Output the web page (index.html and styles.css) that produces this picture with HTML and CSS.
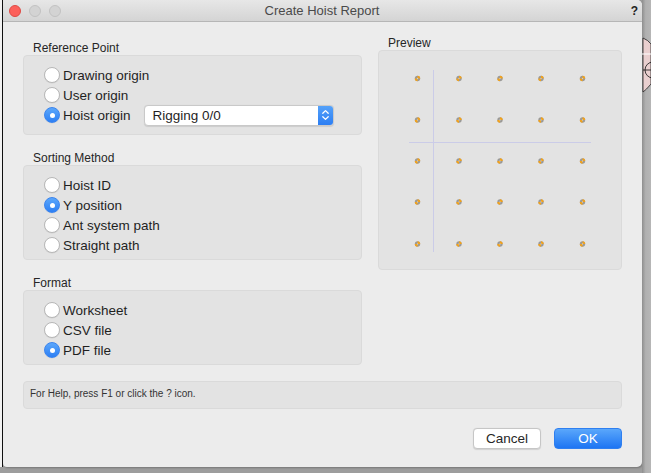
FILE: index.html
```html
<!DOCTYPE html>
<html>
<head>
<meta charset="utf-8">
<title>Create Hoist Report</title>
<link rel="stylesheet" href="styles.css">
</head>
<body>
<div class="screen">
  <div class="left-strip"></div>
  <div class="window">
    <div class="titlebar">
      <div class="lights">
        <span class="light red"></span>
        <span class="light gray"></span>
        <span class="light gray"></span>
      </div>
      <div class="title">Create Hoist Report</div>
      <div class="help-q">?</div>
    </div>
    <div class="content">
      <div class="columns">
        <div class="col-left">
          <div class="group-label">Reference Point</div>
          <div class="group group-ref">
            <div class="row"><span class="radio"></span><span class="rlabel">Drawing origin</span></div>
            <div class="row"><span class="radio"></span><span class="rlabel">User origin</span></div>
            <div class="row"><span class="radio on"></span><span class="rlabel">Hoist origin</span>
              <div class="popup">
                <span class="popup-text">Rigging 0/0</span>
                <span class="stepper">
                  <svg width="15" height="20" viewBox="0 0 15 20"><path d="M4.8 8.2 L7.5 5.6 L10.2 8.2" fill="none" stroke="#fff" stroke-width="1.3" stroke-linecap="round" stroke-linejoin="round"/><path d="M4.8 11.8 L7.5 14.4 L10.2 11.8" fill="none" stroke="#fff" stroke-width="1.3" stroke-linecap="round" stroke-linejoin="round"/></svg>
                </span>
              </div>
            </div>
          </div>

          <div class="group-label gap">Sorting Method</div>
          <div class="group group-sort">
            <div class="row"><span class="radio"></span><span class="rlabel">Hoist ID</span></div>
            <div class="row"><span class="radio on"></span><span class="rlabel">Y position</span></div>
            <div class="row"><span class="radio"></span><span class="rlabel">Ant system path</span></div>
            <div class="row"><span class="radio"></span><span class="rlabel">Straight path</span></div>
          </div>

          <div class="group-label gap">Format</div>
          <div class="group group-format">
            <div class="row"><span class="radio"></span><span class="rlabel">Worksheet</span></div>
            <div class="row"><span class="radio"></span><span class="rlabel">CSV file</span></div>
            <div class="row"><span class="radio on"></span><span class="rlabel">PDF file</span></div>
          </div>
        </div>

        <div class="col-right">
          <div class="group-label preview-label">Preview</div>
          <div class="preview">
            <svg width="244" height="219" viewBox="0 0 244 219">
              <defs>
                <g id="hoist">
                  <circle r="2.7" fill="#9c9a96"/>
                  <path d="M0 0 L0 -2.7 A2.7 2.7 0 0 1 2.7 0 Z" fill="#f2a21c"/>
                  <path d="M0 0 L0 2.7 A2.7 2.7 0 0 1 -2.7 0 Z" fill="#f2a21c"/>
                  <circle r="0.7" fill="#d8d0c0"/>
                </g>
              </defs>
              <line x1="55.5" y1="20" x2="55.5" y2="202" stroke="#cbcce8" stroke-width="1"/>
              <line x1="31" y1="92.5" x2="213" y2="92.5" stroke="#cbcce8" stroke-width="1"/>
              <g>
                <use href="#hoist" x="39.5" y="28.5"/><use href="#hoist" x="81" y="28.5"/><use href="#hoist" x="122" y="28.5"/><use href="#hoist" x="163" y="28.5"/><use href="#hoist" x="204.5" y="28.5"/>
                <use href="#hoist" x="39.5" y="70"/><use href="#hoist" x="81" y="70"/><use href="#hoist" x="122" y="70"/><use href="#hoist" x="163" y="70"/><use href="#hoist" x="204.5" y="70"/>
                <use href="#hoist" x="39.5" y="111"/><use href="#hoist" x="81" y="111"/><use href="#hoist" x="122" y="111"/><use href="#hoist" x="163" y="111"/><use href="#hoist" x="204.5" y="111"/>
                <use href="#hoist" x="39.5" y="152"/><use href="#hoist" x="81" y="152"/><use href="#hoist" x="122" y="152"/><use href="#hoist" x="163" y="152"/><use href="#hoist" x="204.5" y="152"/>
                <use href="#hoist" x="39.5" y="194"/><use href="#hoist" x="81" y="194"/><use href="#hoist" x="122" y="194"/><use href="#hoist" x="163" y="194"/><use href="#hoist" x="204.5" y="194"/>
              </g>
            </svg>
          </div>
        </div>
      </div>

      <div class="helpbox">For Help, press F1 or click the ? icon.</div>

      <div class="buttons">
        <button class="btn cancel">Cancel</button>
        <button class="btn ok">OK</button>
      </div>
    </div>
  </div>
  <div class="right-strip">
    <svg width="9" height="473" viewBox="0 0 9 473">
      <path d="M1 38 Q6 40 9 44 L9 84 Q4 90 1 92 Z" fill="#e9cfcf" stroke="#222" stroke-width="0.8"/>
      <line x1="1" y1="70" x2="9" y2="70" stroke="#111" stroke-width="0.8"/>
      <circle cx="11" cy="70" r="8" fill="none" stroke="#111" stroke-width="0.8"/>
      <line x1="0" y1="54" x2="9" y2="54" stroke="#ffffff" stroke-width="1"/>
    </svg>
  </div>
</div>
</body>
</html>
```

FILE: styles.css
```css
* {
  box-sizing: border-box;
}

html, body {
  margin: 0;
  padding: 0;
}

body {
  width: 651px;
  height: 473px;
  overflow: hidden;
  font-family: "Liberation Sans", Arial, sans-serif;
  color: #262626;
  background: #9d9d9d;
}

.screen {
  display: flex;
  width: 651px;
  height: 473px;
  position: relative;
}

.left-strip {
  width: 3px;
  height: 467px;
  background: #f2f2f2;
  border-right: 1px solid #111;
  flex: none;
}

.window {
  width: 639px;
  height: 467px;
  flex: none;
  background: #ececec;
  border-radius: 0 5px 5px 4px;
  overflow: hidden;
  display: flex;
  flex-direction: column;
  box-shadow: 1px 1px 2px rgba(0,0,0,0.25);
}

.titlebar {
  height: 22px;
  flex: none;
  background: linear-gradient(#e7e7e7, #d4d4d4);
  border-bottom: 1px solid #b6b6b6;
  display: flex;
  align-items: center;
  position: relative;
}

.lights {
  display: flex;
  gap: 8px;
  padding-left: 6px;
  width: 120px;
}

.light {
  width: 12px;
  height: 12px;
  border-radius: 50%;
  display: block;
}

.light.red {
  background: #fc605b;
  border: 1px solid #de4a45;
}

.light.gray {
  background: #d3d3d3;
  border: 1px solid #c2c2c2;
}

.title {
  flex: 1;
  text-align: center;
  font-size: 13px;
  color: #4a4a4a;
  margin-left: -1px;
}

.help-q {
  width: 120px;
  text-align: right;
  padding-right: 4px;
  font-size: 12px;
  font-weight: bold;
  color: #222;
}

.content {
  flex: 1;
  padding: 14px 20px 0 20px;
  display: flex;
  flex-direction: column;
}

.columns {
  display: flex;
  gap: 16px;
  align-items: flex-start;
}

.col-left {
  width: 339px;
  padding-top: 5px;
}

.col-right {
  width: 244px;
}

.group-label {
  font-size: 12px;
  line-height: 14px;
  height: 14px;
  padding-left: 10px;
  color: #262626;
}

.group-label.gap {
  margin-top: 16px;
}

.group {
  background: #e3e3e3;
  border: 1px solid #dadada;
  border-radius: 4px;
  padding-left: 20px;
}

.group-ref {
  height: 80px;
  padding-top: 9px;
}

.group-sort {
  height: 95px;
  padding-top: 9px;
}

.group-format {
  height: 75px;
  padding-top: 9px;
}

.row {
  display: flex;
  align-items: center;
  height: 20px;
}

.radio {
  width: 16px;
  height: 16px;
  border-radius: 50%;
  background: #ffffff;
  border: 1px solid #b7b7b7;
  box-shadow: 0 0.5px 0.5px rgba(0,0,0,0.08);
  flex: none;
  position: relative;
}

.radio.on {
  background: linear-gradient(#5ba7fb, #2d7ff4);
  border-color: #3a84ef;
}

.radio.on::after {
  content: "";
  position: absolute;
  left: 4.5px;
  top: 4.5px;
  width: 5px;
  height: 5px;
  border-radius: 50%;
  background: #fff;
}

.rlabel {
  font-size: 13.5px;
  margin-left: 3px;
  color: #1f1f1f;
}

.popup {
  margin-left: 13px;
  width: 190px;
  height: 21px;
  background: #fff;
  border: 1px solid #c9c9c9;
  border-radius: 4px;
  display: flex;
  align-items: center;
  overflow: hidden;
  box-shadow: 0 0.5px 1px rgba(0,0,0,0.1);
}

.popup-text {
  flex: 1;
  font-size: 13.5px;
  padding-left: 8px;
  color: #1f1f1f;
}

.stepper {
  width: 15px;
  height: 20px;
  background: linear-gradient(#56a3fa, #2c7ef3);
  display: flex;
}

.preview {
  height: 220px;
  background: #e3e3e3;
  border: 1px solid #dadada;
  border-radius: 4px;
  overflow: hidden;
}

.preview svg {
  display: block;
  margin: -1px 0 0 -1px;
}

.helpbox {
  margin-top: 16px;
  height: 28px;
  background: #e3e3e3;
  border: 1px solid #dadada;
  border-radius: 4px;
  font-size: 10px;
  line-height: 12px;
  padding: 6px 0 0 6px;
  color: #333;
}

.buttons {
  display: flex;
  justify-content: flex-end;
  gap: 13px;
  margin-top: 19px;
}

.btn {
  width: 68px;
  height: 21px;
  border-radius: 4px;
  font-family: "Liberation Sans", Arial, sans-serif;
  font-size: 13.5px;
  padding: 0;
  line-height: 19px;
}

.cancel {
  background: #fff;
  border: 1px solid #c6c6c6;
  color: #262626;
  box-shadow: 0 0.5px 1px rgba(0,0,0,0.12);
}

.ok {
  background: linear-gradient(#5aa7fb, #1e75f3);
  border: 1px solid #2f7ff0;
  color: #fff;
}

.right-strip {
  width: 9px;
  height: 473px;
  flex: none;
  background: linear-gradient(90deg, #8e8e8e, #b0b0b0 40%, #b6b6b6);
}

.right-strip svg {
  display: block;
}
```
